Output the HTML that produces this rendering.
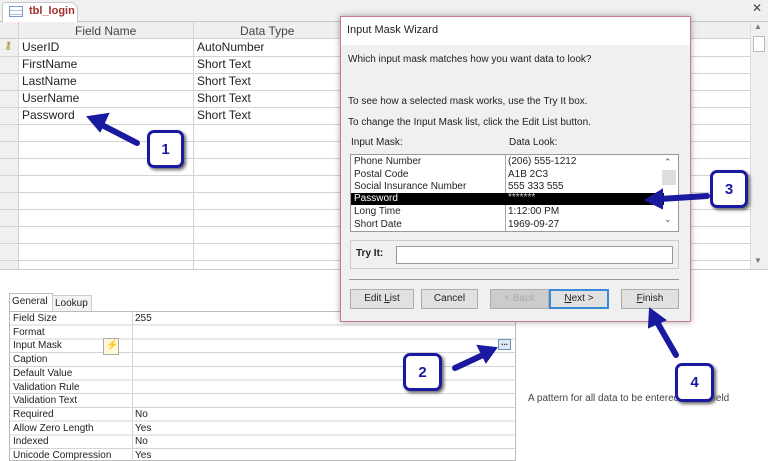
<!DOCTYPE html>
<html><head><meta charset="utf-8"><style>
*{margin:0;padding:0;box-sizing:border-box}
body{width:768px;height:459px;overflow:hidden;background:#fff;font-family:"Liberation Sans",sans-serif;position:relative;color:#222}
.a{position:absolute}
.t{position:absolute;font-size:12px;white-space:nowrap}
.s{position:absolute;font-size:10px;white-space:nowrap}
.hl{position:absolute;height:1px;background:#d4d4d4}
.vl{position:absolute;width:1px;background:#d4d4d4}
.call{position:absolute;border:3px solid #1a1aa0;border-radius:7px;background:#fff;box-shadow:2px 2px 3px #666;color:#1a1aa0;font-weight:bold;font-size:15px;display:flex;align-items:center;justify-content:center}
.btn{position:absolute;height:20px;background:#e1e1e1;border:1px solid #adadad;font-size:10px;line-height:18px;text-align:center;white-space:nowrap}
</style></head><body>
<div class="a" style="left:0;top:0;width:768px;height:22px;background:#f0f0f0;border-bottom:1px solid #c8c8c8"></div>
<div class="a" style="left:2px;top:2px;width:76px;height:21px;background:#fff;border:1px solid #c8c8c8;border-bottom:none;border-radius:3px 8px 0 0"></div>
<div class="a" style="left:9px;top:6px;width:14px;height:11px;border:1px solid #7a9cc0;background:repeating-linear-gradient(#fff 0 3px,#a9c0da 3px 4px)"></div>
<div class="t" style="left:29px;top:5px;color:#a0302c;font-size:11px;font-weight:bold">tbl_login</div>
<div class="t" style="left:752px;top:1px;font-size:12px;color:#444">✕</div>
<div class="a" style="left:0;top:22px;width:750px;height:17px;background:#efefef;border-bottom:1px solid #d0d0d0"></div>
<div class="a" style="left:0;top:39px;width:18px;height:230px;background:#f0f0f0"></div>
<div class="t" style="left:75px;top:24px;color:#444">Field Name</div>
<div class="t" style="left:240px;top:24px;color:#444">Data Type</div>
<div class="vl" style="left:18px;top:22px;height:247px"></div>
<div class="vl" style="left:193px;top:22px;height:247px"></div>
<div class="hl" style="left:0;top:56px;width:750px"></div>
<div class="hl" style="left:0;top:73px;width:750px"></div>
<div class="hl" style="left:0;top:90px;width:750px"></div>
<div class="hl" style="left:0;top:107px;width:750px"></div>
<div class="hl" style="left:0;top:124px;width:750px"></div>
<div class="hl" style="left:0;top:141px;width:750px"></div>
<div class="hl" style="left:0;top:158px;width:750px"></div>
<div class="hl" style="left:0;top:175px;width:750px"></div>
<div class="hl" style="left:0;top:192px;width:750px"></div>
<div class="hl" style="left:0;top:209px;width:750px"></div>
<div class="hl" style="left:0;top:226px;width:750px"></div>
<div class="hl" style="left:0;top:243px;width:750px"></div>
<div class="hl" style="left:0;top:260px;width:750px"></div>
<div class="t" style="left:4px;top:39px;color:#a08a10;font-size:11px">⚷</div>
<div class="t" style="left:22px;top:40px">UserID</div><div class="t" style="left:197px;top:40px">AutoNumber</div>
<div class="t" style="left:22px;top:57px">FirstName</div><div class="t" style="left:197px;top:57px">Short Text</div>
<div class="t" style="left:22px;top:74px">LastName</div><div class="t" style="left:197px;top:74px">Short Text</div>
<div class="t" style="left:22px;top:91px">UserName</div><div class="t" style="left:197px;top:91px">Short Text</div>
<div class="t" style="left:22px;top:108px">Password</div><div class="t" style="left:197px;top:108px">Short Text</div>
<div class="a" style="left:750px;top:22px;width:18px;height:247px;background:#f0f0f0;border-left:1px solid #ddd"></div>
<div class="a" style="left:753px;top:36px;width:12px;height:16px;background:#fff;border:1px solid #bbb"></div>
<div class="s" style="left:754px;top:22px;font-size:8px;color:#777">▲</div>
<div class="s" style="left:754px;top:256px;font-size:8px;color:#777">▼</div>
<div class="hl" style="left:0;top:269px;width:768px;background:#ccc"></div>
<div class="a" style="left:9px;top:293px;width:44px;height:19px;background:#fff;border:1px solid #bbb;border-bottom:none"></div>
<div class="s" style="left:12px;top:296px">General</div>
<div class="a" style="left:52px;top:295px;width:40px;height:16px;background:#f3f3f3;border:1px solid #ccc;border-bottom:none"></div>
<div class="s" style="left:55px;top:298px">Lookup</div>
<div class="a" style="left:9px;top:311px;width:507px;height:150px;border:1px solid #bbb;background:repeating-linear-gradient(#fff 0 12.7px,#d4d4d4 12.7px 13.7px)"></div>
<div class="vl" style="left:132px;top:311px;height:150px"></div>
<div class="s" style="left:13px;top:313px">Field Size</div><div class="s" style="left:135px;top:313px">255</div>
<div class="s" style="left:13px;top:327px">Format</div>
<div class="s" style="left:13px;top:340px">Input Mask</div>
<div class="a" style="left:103px;top:338px;width:16px;height:17px;background:#fff8d8;border:1px solid #aaa"></div>
<div class="s" style="left:106px;top:340px;color:#c9a000">⚡</div>
<div class="s" style="left:13px;top:354px">Caption</div>
<div class="s" style="left:13px;top:368px">Default Value</div>
<div class="s" style="left:13px;top:382px">Validation Rule</div>
<div class="s" style="left:13px;top:395px">Validation Text</div>
<div class="s" style="left:13px;top:409px">Required</div><div class="s" style="left:135px;top:409px">No</div>
<div class="s" style="left:13px;top:423px">Allow Zero Length</div><div class="s" style="left:135px;top:423px">Yes</div>
<div class="s" style="left:13px;top:436px">Indexed</div><div class="s" style="left:135px;top:436px">No</div>
<div class="s" style="left:13px;top:450px">Unicode Compression</div><div class="s" style="left:135px;top:450px">Yes</div>
<div class="a" style="left:498px;top:339px;width:13px;height:11px;background:#dce8f4;border:1px solid #6a8fb8;font-size:8px;line-height:6px;text-align:center;font-weight:bold">...</div>
<div class="s" style="left:528px;top:393px;color:#444">A pattern for all data to be entered in this field</div>
<div class="a" style="left:340px;top:16px;width:351px;height:306px;background:#f0f0f0;border:1px solid #c87898;box-shadow:0 0 6px rgba(0,0,0,.35)"></div>
<div class="a" style="left:341px;top:17px;width:349px;height:28px;background:#fff"></div>
<div class="t" style="left:347px;top:24px;font-size:11px">Input Mask Wizard</div>
<div class="s" style="left:348px;top:54px">Which input mask matches how you want data to look?</div>
<div class="s" style="left:348px;top:96px">To see how a selected mask works, use the Try It box.</div>
<div class="s" style="left:348px;top:117px">To change the Input Mask list, click the Edit List button.</div>
<div class="s" style="left:351px;top:137px">Input Mask:</div>
<div class="s" style="left:509px;top:137px">Data Look:</div>
<div class="a" style="left:350px;top:154px;width:329px;height:78px;background:#fff;border:1px solid #999"></div>
<div class="vl" style="left:505px;top:155px;height:76px;background:#aaa"></div>
<div class="a" style="left:351px;top:193px;width:313px;height:12px;background:#000"></div>
<div class="a" style="left:662px;top:170px;width:14px;height:15px;background:#ddd"></div>
<div class="s" style="left:664px;top:157px;font-size:9px;color:#555">⌃</div>
<div class="s" style="left:664px;top:214px;font-size:9px;color:#555">⌄</div>
<div class="s" style="left:354px;top:156px">Phone Number</div><div class="s" style="left:508px;top:156px">(206) 555-1212</div>
<div class="s" style="left:354px;top:169px">Postal Code</div><div class="s" style="left:508px;top:169px">A1B 2C3</div>
<div class="s" style="left:354px;top:181px">Social Insurance Number</div><div class="s" style="left:508px;top:181px">555 333 555</div>
<div class="s" style="left:354px;top:193px;color:#fff">Password</div><div class="s" style="left:508px;top:192px;color:#ccc">*******</div>
<div class="s" style="left:354px;top:206px">Long Time</div><div class="s" style="left:508px;top:206px">1:12:00 PM</div>
<div class="s" style="left:354px;top:219px">Short Date</div><div class="s" style="left:508px;top:219px">1969-09-27</div>
<div class="a" style="left:350px;top:240px;width:329px;height:29px;border:1px solid #ccc"></div>
<div class="s" style="left:356px;top:248px;font-weight:bold">Try It:</div>
<div class="a" style="left:396px;top:246px;width:277px;height:18px;background:#fff;border:1px solid #999"></div>
<div class="hl" style="left:349px;top:279px;width:330px;background:#999"></div>
<div class="btn" style="left:350px;top:289px;width:64px">Edit <u>L</u>ist</div>
<div class="btn" style="left:421px;top:289px;width:57px">Cancel</div>
<div class="btn" style="left:490px;top:289px;width:59px;color:#aaa;background:#ccc">&lt; Back</div>
<div class="btn" style="left:549px;top:289px;width:60px;border:2px solid #3a8ad8;line-height:16px"><u>N</u>ext &gt;</div>
<div class="btn" style="left:621px;top:289px;width:58px"><u>F</u>inish</div>
<svg class="a" style="left:0;top:0" width="768" height="459">
<g stroke="#1a1aa0" stroke-width="6" stroke-linecap="round" fill="#1a1aa0">
<line x1="137" y1="143" x2="100" y2="124"/><polygon points="88,117 108,114 100,131" stroke-width="2"/>
<line x1="455" y1="368" x2="483" y2="355"/><polygon points="496,348 478,346 486,362" stroke-width="2"/>
<line x1="707" y1="196" x2="660" y2="199"/><polygon points="646,200 662,190 662,208" stroke-width="2"/>
<line x1="676" y1="355" x2="657" y2="322"/><polygon points="650,309 649,327 665,320" stroke-width="2"/>
</g></svg>
<div class="call" style="left:147px;top:130px;width:37px;height:38px">1</div>
<div class="call" style="left:403px;top:353px;width:39px;height:38px">2</div>
<div class="call" style="left:710px;top:170px;width:38px;height:38px">3</div>
<div class="call" style="left:675px;top:363px;width:39px;height:39px">4</div>
</body></html>
